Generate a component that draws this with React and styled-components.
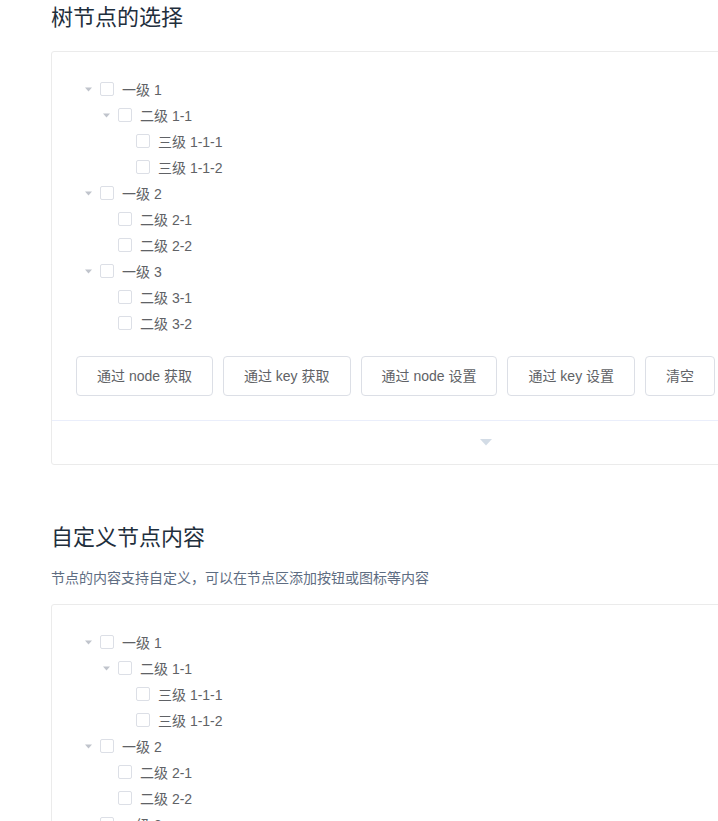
import styled, { createGlobalStyle } from "styled-components";

const GlobalStyle = createGlobalStyle`
    html, body {
        margin: 0;
        padding: 0;
        background: #ffffff;
        overflow-x: hidden;
    }
    body {
        font-family: "Liberation Sans", "Noto Sans CJK SC", sans-serif;
        color: #606266;
    }
`;

const Page = styled.div`
    padding-left: 51px;
    width: 870px;
`;

const Title = styled.h3`
    margin: ${(p) => (p.$first ? "0" : "55px")} 0 0;
    font-size: 22px;
    line-height: 36px;
    font-weight: 400;
    color: #1f2f3d;
`;

const Desc = styled.p`
    margin: 12px 0 0;
    font-size: 14px;
    line-height: 21px;
    color: #5e6d82;
`;

const Card = styled.div`
    margin-top: ${(p) => p.$gap}px;
    border: 1px solid #ebebeb;
    border-radius: 3px;
`;

const Source = styled.div`
    padding: 24px;
`;

const Row = styled.div`
    display: flex;
    align-items: center;
    height: 26px;
    padding-left: ${(p) => p.$level * 18}px;
    font-size: 14px;
    color: #606266;
`;

const Expand = styled.span`
    width: 24px;
    height: 24px;
    display: flex;
    align-items: center;
    justify-content: center;
    svg {
        visibility: ${(p) => (p.$leaf ? "hidden" : "visible")};
    }
`;

const Box = styled.span`
    width: 14px;
    height: 14px;
    box-sizing: border-box;
    border: 1px solid #dcdfe6;
    border-radius: 2px;
    background: #ffffff;
    margin-right: 8px;
`;

const Label = styled.span`
    padding-top: 2px;
    line-height: 24px;
`;

const Buttons = styled.div`
    display: flex;
    gap: 10px;
    margin-top: 20px;
`;

const Button = styled.button`
    padding: 12px 20px;
    font-family: inherit;
    font-size: 14px;
    line-height: 14px;
    color: #606266;
    background: #ffffff;
    border: 1px solid #dcdfe6;
    border-radius: 4px;
    white-space: nowrap;
    cursor: pointer;
`;

const Control = styled.div`
    height: 44px;
    box-sizing: border-box;
    border-top: 1px solid #eaeefb;
    display: flex;
    align-items: center;
    justify-content: center;
`;

const tree = [
    {
        label: "一级 1",
        children: [
            { label: "二级 1-1", children: [{ label: "三级 1-1-1" }, { label: "三级 1-1-2" }] },
        ],
    },
    { label: "一级 2", children: [{ label: "二级 2-1" }, { label: "二级 2-2" }] },
    { label: "一级 3", children: [{ label: "二级 3-1" }, { label: "二级 3-2" }] },
];

function Caret() {
    return (
        <svg width="7" height="5" viewBox="0 0 7 5">
            <path d="M0 0.5 L7 0.5 L3.5 4.5 Z" fill="#c0c4cc" />
        </svg>
    );
}

function TreeNodes({ nodes, level }) {
    return nodes.map((n) => (
        <div key={n.label}>
            <Row $level={level}>
                <Expand $leaf={!n.children}>
                    <Caret />
                </Expand>
                <Box />
                <Label>{n.label}</Label>
            </Row>
            {n.children && <TreeNodes nodes={n.children} level={level + 1} />}
        </div>
    ));
}

const actions = ["通过 node 获取", "通过 key 获取", "通过 node 设置", "通过 key 设置", "清空"];

export default function App() {
    return (
        <>
            <GlobalStyle />
            <Page>
                <Title $first>树节点的选择</Title>
                <Card $gap={15}>
                    <Source>
                        <TreeNodes nodes={tree} level={0} />
                        <Buttons>
                            {actions.map((a) => (
                                <Button key={a}>{a}</Button>
                            ))}
                        </Buttons>
                    </Source>
                    <Control>
                        <svg width="12" height="7" viewBox="0 0 12 7">
                            <path d="M0 0 L12 0 L6 6.5 Z" fill="#d3dce6" />
                        </svg>
                    </Control>
                </Card>

                <Title>自定义节点内容</Title>
                <Desc>节点的内容支持自定义，可以在节点区添加按钮或图标等内容</Desc>
                <Card $gap={15}>
                    <Source>
                        <TreeNodes nodes={tree} level={0} />
                    </Source>
                </Card>
            </Page>
        </>
    );
}
